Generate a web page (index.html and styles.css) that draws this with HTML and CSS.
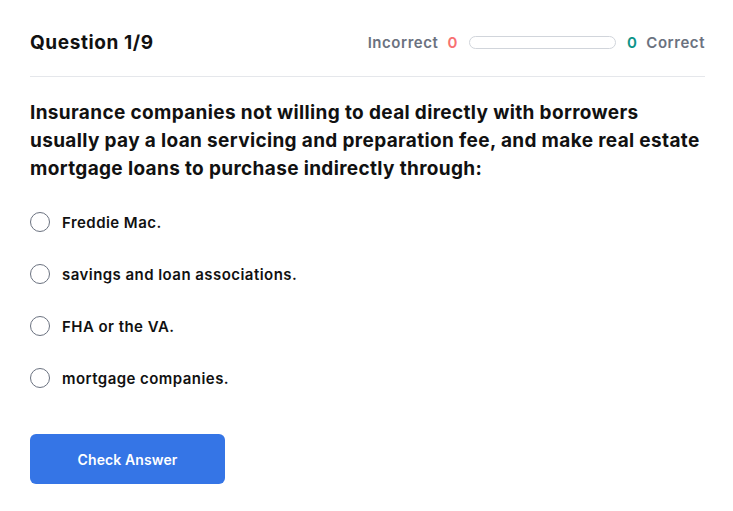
FILE: index.html
```html
<!DOCTYPE html>
<html>
<head>
<meta charset="utf-8">
<link rel="stylesheet" href="styles.css">
</head>
<body>
<div class="quiz">
  <div class="header">
    <div class="title">Question 1/9</div>
    <div class="score">
      <span class="label">Incorrect</span>
      <span class="num bad">0</span>
      <div class="bar"></div>
      <span class="num good">0</span>
      <span class="label">Correct</span>
    </div>
  </div>
  <div class="question">Insurance companies not willing to deal directly with borrowers usually pay a loan servicing and preparation fee, and make real estate mortgage loans to purchase indirectly through:</div>
  <div class="options">
    <div class="option"><span class="radio"></span><span>Freddie Mac.</span></div>
    <div class="option"><span class="radio"></span><span>savings and loan associations.</span></div>
    <div class="option"><span class="radio"></span><span>FHA or the VA.</span></div>
    <div class="option"><span class="radio"></span><span>mortgage companies.</span></div>
  </div>
  <button class="check">Check Answer</button>
</div>
</body>
</html>
```
FILE: styles.css
```css
* { box-sizing: border-box; }
body {
  margin: 0;
  background: #fff;
  font-family: Inter, "Noto Sans", sans-serif;
  color: #111;
}
.quiz {
  padding: 0 28px 0 30px;
}
.header {
  display: flex;
  justify-content: space-between;
  align-items: center;
  height: 77px;
  border-bottom: 1px solid #e5e7eb;
  padding-top: 19px;
  padding-bottom: 10px;
}
.title {
  font-size: 19px;
  font-weight: 700;
  letter-spacing: 0.6px;
}
.score {
  display: flex;
  align-items: center;
  font-size: 15px;
  font-weight: 600;
  letter-spacing: 0.55px;
}
.label { color: #6b7280; }
.num { margin: 0 9px; }
.bad { color: #f87171; }
.good { color: #0d9488; }
.bar {
  width: 147px;
  height: 13px;
  border: 1px solid #d1d5db;
  border-radius: 7px;
  margin: 0 2px 0 2px;
}
.question {
  font-size: 19px;
  font-weight: 700;
  line-height: 28px;
  margin-top: 22px;
  letter-spacing: 0.35px;
}
.options {
  margin-top: 27px;
  display: flex;
  flex-direction: column;
  gap: 28px;
}
.option {
  display: flex;
  align-items: center;
  height: 24px;
  font-size: 15px;
  font-weight: 600;
  letter-spacing: 0.45px;
}
.radio {
  width: 20px;
  height: 20px;
  border: 1px solid #6b7280;
  border-radius: 50%;
  margin-right: 12px;
  flex: none;
}
.check {
  margin-top: 44px;
  width: 195px;
  height: 50px;
  border: none;
  border-radius: 6px;
  background: #3575e6;
  color: #fff;
  font-family: Inter, "Noto Sans", sans-serif;
  font-size: 14px;
  font-weight: 600;
  letter-spacing: 0.1px;
}
```
